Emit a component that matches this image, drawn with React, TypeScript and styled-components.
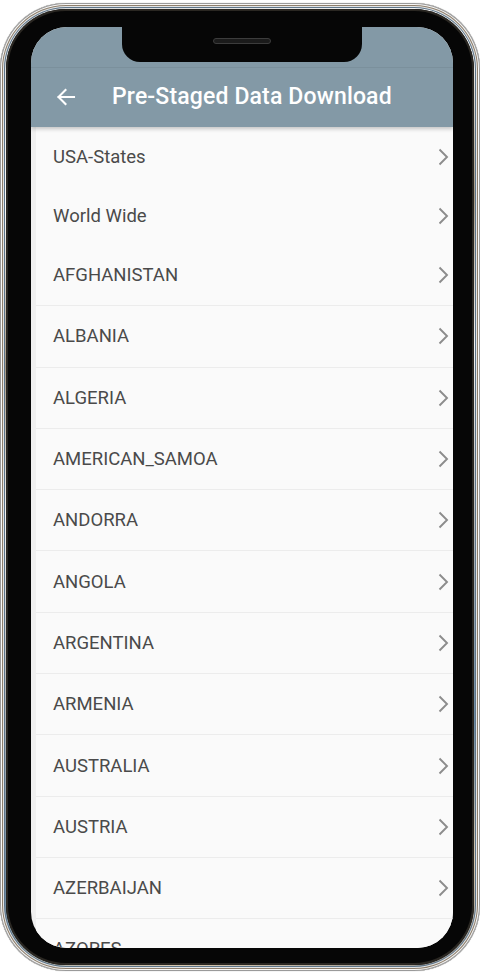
import React from "react";
import styled, { createGlobalStyle } from "styled-components";

const GlobalStyle = createGlobalStyle`
	html, body {
		margin: 0;
		padding: 0;
		background: #ffffff;
	}
	body {
		font-family: Roboto, "Noto Sans", "Liberation Sans", sans-serif;
	}
	* {
		box-sizing: border-box;
	}
`;

const pinned = ["USA-States", "World Wide"];

const countries = [
	"AFGHANISTAN",
	"ALBANIA",
	"ALGERIA",
	"AMERICAN_SAMOA",
	"ANDORRA",
	"ANGOLA",
	"ARGENTINA",
	"ARMENIA",
	"AUSTRALIA",
	"AUSTRIA",
	"AZERBAIJAN",
	"AZORES",
];

const BackArrow = () => (
	<svg width="20" height="20" viewBox="0 0 20 20" fill="none">
		<path d="M18 10H2.5M9.5 3L2.5 10L9.5 17" stroke="#ffffff" strokeWidth="2.1" strokeLinecap="square" />
	</svg>
);

const Chevron = () => (
	<svg width="11" height="18" viewBox="0 0 11 18" fill="none">
		<path d="M1.5 1.5L9 9L1.5 16.5" stroke="#8c8c8c" strokeWidth="1.9" />
	</svg>
);

export default function App() {
	return (
		<>
			<GlobalStyle />
			<Page>
				<Phone>
					<Bezel>
						<Screen>
							<Notch>
								<Speaker />
							</Notch>
							<Header>
								<StatusBar />
								<Toolbar>
									<BackArrow />
									<Title>Pre-Staged Data Download</Title>
								</Toolbar>
							</Header>
							<List>
								{pinned.map((name) => (
									<Row key={name} $plain>
										<Label>{name}</Label>
										<Chevron />
									</Row>
								))}
								{countries.map((name) => (
									<Row key={name}>
										<Label>{name}</Label>
										<Chevron />
									</Row>
								))}
							</List>
						</Screen>
					</Bezel>
				</Phone>
			</Page>
		</>
	);
}

// style 영역
const Page = styled.div`
	width: 480px;
	height: 973px;
	padding-top: 3px;
	overflow: hidden;
	background: #ffffff;
`;

const Phone = styled.div`
	width: 480px;
	height: 968px;
	padding: 6px;
	border-radius: 66px;
	background: linear-gradient(160deg, #d2d2d2 0%, #fbfbfb 18%, #a89a86 32%, #f2f2f2 45%, #b9b9b9 60%, #6d8ca6 78%, #d8c7ae 90%, #8c8c8c 100%);
	box-shadow: inset 0 0 0 1px #9a9a9a, inset 0 0 0 2px #f7f7f7, inset 0 0 0 3px #8e7f6c, inset 0 0 0 4px #e2e2e2,
		inset 0 0 0 5px #5d7589, 0 0 1px rgba(0, 0, 0, 0.4);
`;

const Bezel = styled.div`
	height: 100%;
	padding: 18px 21px 17px 25px;
	border-radius: 60px;
	background: #060606;
	box-shadow: inset 0 0 0 2px #2a2722;
`;

const Screen = styled.div`
	position: relative;
	height: 100%;
	border-radius: 36px;
	overflow: hidden;
	background: #f0f0f0;
	display: flex;
	flex-direction: column;
`;

const Notch = styled.div`
	position: absolute;
	top: 0;
	left: 91px;
	width: 240px;
	height: 35px;
	background: #060606;
	border-radius: 0 0 18px 18px;
	z-index: 3;
	display: flex;
	justify-content: center;
`;

const Speaker = styled.div`
	margin-top: 11px;
	width: 58px;
	height: 6px;
	border-radius: 3px;
	background: #1b1b1b;
	border: 1px solid #3c3c3c;
`;

const Header = styled.header`
	flex: none;
	background: #8399a6;
	box-shadow: 0 2px 4px rgba(0, 0, 0, 0.22);
	position: relative;
	z-index: 2;
`;

const StatusBar = styled.div`
	height: 41px;
	border-bottom: 1px solid rgba(0, 0, 0, 0.06);
`;

const Toolbar = styled.div`
	height: 59px;
	display: flex;
	align-items: center;
	padding-left: 25px;
	padding-bottom: 2px;
`;

const Title = styled.h1`
	margin: 0 0 0 36px;
	color: #ffffff;
	font-size: 23px;
	font-weight: 500;
	letter-spacing: 0.15px;
	white-space: nowrap;
`;

const List = styled.div`
	flex: 1;
	margin-left: 5px;
	background: #fafafa;
	display: flex;
	flex-direction: column;
`;

const Row = styled.div<{ $plain?: boolean }>`
	flex: none;
	height: ${({ $plain }) => ($plain ? "59px" : "61.3px")};
	padding: 0 4px 0 17px;
	display: flex;
	align-items: center;
	justify-content: space-between;
	border-bottom: ${({ $plain }) => ($plain ? "none" : "1px solid #ececec")};
`;

const Label = styled.span`
	font-size: 18.5px;
	color: #4a4a4a;
`;
